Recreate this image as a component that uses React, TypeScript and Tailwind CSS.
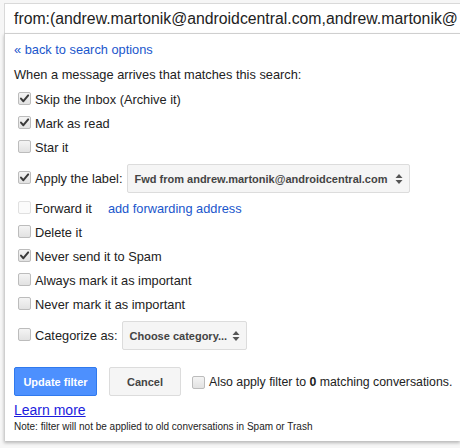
function Check({ checked, disabled }: { checked?: boolean; disabled?: boolean }) {
    return (
        <span
            className={`relative inline-block w-[13px] h-[13px] shrink-0 rounded-[2px] border ${disabled
                ? "border-[#e0e0e0] bg-[#fbfbfb]"
                : "border-[#bcbcbc] bg-gradient-to-b from-[#f4f4f4] to-[#e2e2e2]"
                }`}
        >
            {checked && (
                <svg viewBox="0 0 13 13" className="absolute -left-px -top-px w-[13px] h-[13px]">
                    <path d="M3 6.6 L5.4 9.2 L10.2 3.4" fill="none" stroke="#3a3a3a" strokeWidth="2" strokeLinecap="round" strokeLinejoin="round" />
                </svg>
            )}
        </span>
    );
}

function Arrows() {
    return (
        <svg viewBox="0 0 8 12" className="w-[8px] h-[12px]">
            <path d="M0.5 5 L4 1 L7.5 5 Z" fill="#555" />
            <path d="M0.5 7 L4 11 L7.5 7 Z" fill="#555" />
        </svg>
    );
}

function Row({ checked, disabled, children }: { checked?: boolean; disabled?: boolean; children: React.ReactNode }) {
    return (
        <div className="flex items-center h-[24px] pl-[4px] whitespace-nowrap">
            <span className="-mt-[3px] flex"><Check checked={checked} disabled={disabled} /></span>
            <span className="ml-[4px] flex items-center">{children}</span>
        </div>
    );
}

function Select({ label, width }: { label: string; width: string }) {
    return (
        <div className={`flex items-center justify-between h-[29px] ${width} ml-[4px] pl-[7px] pr-[6px] rounded-[2px] border border-[#dcdcdc] bg-[#f5f5f5] text-[11px] font-bold text-[#444]`}>
            <span>{label}</span>
            <Arrows />
        </div>
    );
}

export default function App() {
    return (
        <div className="w-[460px] h-[448px] overflow-hidden bg-[#f6f6f6] pt-[3px] text-[12.8px] text-[#222] font-['Liberation_Sans',Arial,sans-serif]">
            <div className="ml-[4px] h-[30px] bg-white border-l border-t border-[#d9d9d9] pl-[9px] flex items-center text-[15.8px] text-[#222] whitespace-nowrap overflow-hidden">
                from:(andrew.martonik@androidcentral.com,andrew.martonik@
            </div>
            <div className="ml-[4px] h-[408px] bg-white border-l border-t border-[#cfcfcf] shadow-[0_2px_3px_rgba(0,0,0,0.25)] pl-[9px] pt-[8px] leading-[16px] whitespace-nowrap">
                <div className="text-[#1a56cc]">« back to search options</div>
                <div className="mt-[9px]">When a message arrives that matches this search:</div>
                <div className="mt-[5px]">
                    <Row checked>Skip the Inbox (Archive it)</Row>
                    <Row checked>Mark as read</Row>
                    <Row>Star it</Row>
                    <div className="flex items-center h-[33px] mt-[2px] pl-[4px]">
                        <span className="-mt-[3px] flex"><Check checked /></span>
                        <span className="ml-[4px]">Apply the label:</span>
                        <Select label="Fwd from andrew.martonik@androidcentral.com" width="w-[283px]" />
                    </div>
                    <div className="mt-[2px]">
                        <Row disabled>
                            Forward it
                            <span className="ml-[16px] text-[#1a56cc]">add forwarding address</span>
                        </Row>
                    </div>
                    <Row>Delete it</Row>
                    <Row checked>Never send it to Spam</Row>
                    <Row>Always mark it as important</Row>
                    <Row>Never mark it as important</Row>
                    <div className="flex items-center h-[33px] mt-[2px] pl-[4px]">
                        <span className="-mt-[3px] flex"><Check /></span>
                        <span className="ml-[4px]">Categorize as:</span>
                        <Select label="Choose category..." width="w-[125px]" />
                    </div>
                </div>
                <div className="flex items-start mt-[15px]">
                    <button className="h-[29px] w-[83px] shrink-0 rounded-[2px] border border-[#3079ed] bg-[#4d90fe] text-white text-[11px] font-bold">
                        Update filter
                    </button>
                    <button className="ml-[12px] h-[29px] w-[72px] shrink-0 rounded-[2px] border border-[#dcdcdc] bg-[#f5f5f5] text-[#444] text-[11px] font-bold">
                        Cancel
                    </button>
                    <div className="ml-[11px] mt-[9px] flex items-start">
                        <Check />
                        <span className="ml-[4px] -mt-[2px] text-[12.3px]">
                            Also apply filter to <b>0</b> matching conversations.
                        </span>
                    </div>
                </div>
                <div className="mt-[6px] text-[14px] text-[#1c1cdd] underline">Learn more</div>
                <div className="mt-[3px] text-[10px] leading-[12px]">Note: filter will not be applied to old conversations in Spam or Trash</div>
            </div>
        </div>
    );
}
